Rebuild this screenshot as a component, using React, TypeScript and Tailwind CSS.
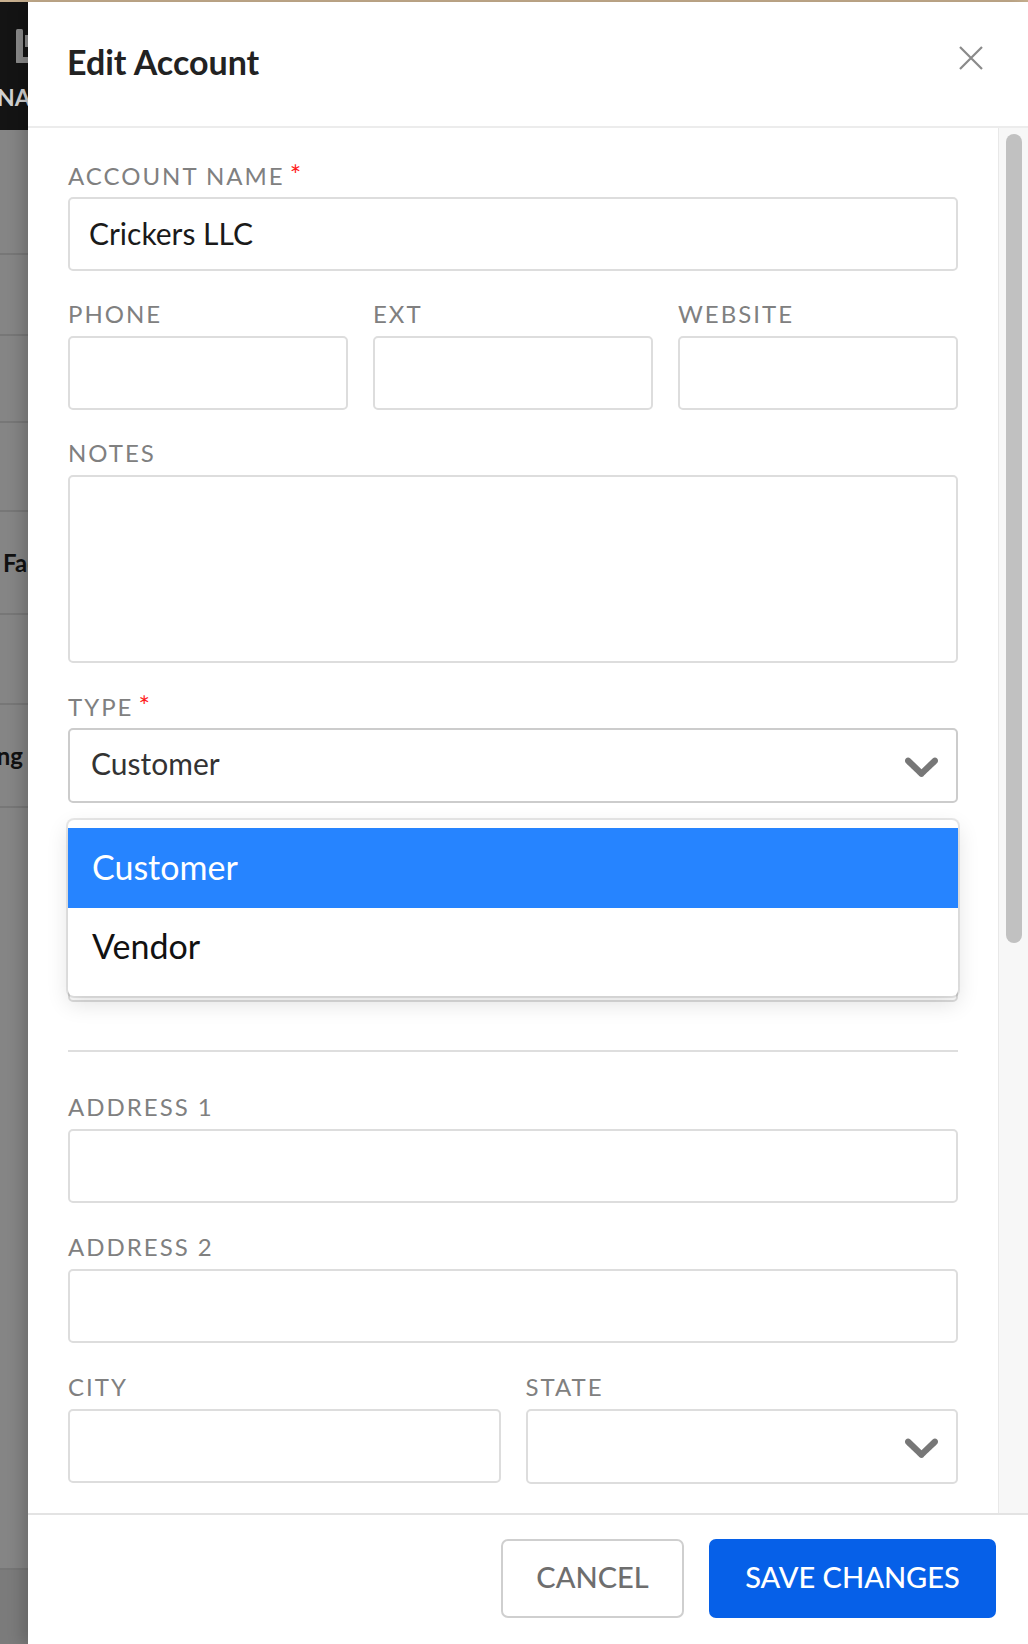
import React from "react";

const labelCls =
  "block h-[28px] leading-[28px] text-[24px] tracking-[2px] text-[#808080] mb-[8px] whitespace-nowrap";

function Label({ text, required }: { text: string; required?: boolean }) {
  return (
    <div className={labelCls}>
      {text}
      {required && <span className="ml-[5px] text-[27px] text-[#ff1a1a]">*</span>}
    </div>
  );
}

function Box({ h = "h-[74px]", children }: { h?: string; children?: React.ReactNode }) {
  return (
    <div
      className={`${h} border-2 border-[#dddddd] rounded-[5px] bg-white flex items-center pl-[19px] pb-[2px] text-[30px] text-[#1a1a1a]`}
    >
      {children}
    </div>
  );
}

function Chevron() {
  return (
    <svg width="57" height="57" viewBox="0 0 20 20" fill="#777777" aria-hidden="true">
      <path d="M4.516 7.548c0.436-0.446 1.043-0.481 1.576 0l3.908 3.747 3.908-3.747c0.533-0.481 1.141-0.446 1.574 0 0.436 0.445 0.408 1.197 0 1.615-0.406 0.418-4.695 4.502-4.695 4.502-0.217 0.223-0.502 0.335-0.787 0.335s-0.57-0.112-0.789-0.335c0 0-4.287-4.084-4.695-4.502s-0.436-1.17 0-1.615z" />
    </svg>
  );
}

function SelectBox({ value, border }: { value?: string; border: string }) {
  return (
    <div
      className={`h-[75px] border-2 ${border} rounded-[5px] bg-white flex items-center justify-between pl-[21px] pr-[6px] text-[30px] text-[#333333]`}
    >
      <span className="-mt-[4px]">{value}</span>
      <Chevron />
    </div>
  );
}

function BackdropStrip() {
  return (
    <aside className="w-[28px] shrink-0 flex flex-col bg-[#858585] overflow-hidden font-['Lato',sans-serif]">
      <div className="h-[128px] bg-[#141414] relative">
        <svg className="absolute left-[16px] top-[27px]" width="14" height="34" viewBox="0 0 14 34" aria-hidden="true">
          <rect x="0" y="0" width="7" height="34" rx="1.5" fill="#8a8a8a" />
          <rect x="0" y="28" width="14" height="6" rx="1" fill="#8a8a8a" />
          <rect x="9" y="6" width="5" height="12" fill="#8a8a8a" />
        </svg>
        <div className="absolute left-[-3px] top-[81px] text-[23px] font-bold text-[#d2d2d2] whitespace-nowrap leading-[28px]">
          NAILS
        </div>
      </div>
      <div className="h-[125px] border-b-2 border-[#777777]" />
      <div className="h-[81px] border-b-2 border-[#777777]" />
      <div className="h-[87px] border-b-2 border-[#777777]" />
      <div className="h-[89px] border-b-2 border-[#777777]" />
      <div className="h-[103px] border-b-2 border-[#777777] flex items-center pl-[3px]">
        <span className="text-[24px] font-bold text-[#111111] whitespace-nowrap">Facilities</span>
      </div>
      <div className="h-[90px] border-b-2 border-[#777777]" />
      <div className="h-[103px] border-b-2 border-[#777777] flex items-center justify-end pr-[5px]">
        <span className="text-[24px] font-bold text-[#111111] whitespace-nowrap">Billing</span>
      </div>
      <div className="h-[762px] border-b-2 border-[#767676]" />
      <div className="flex-1 bg-[#7b7b7b]" />
    </aside>
  );
}

export default function App() {
  return (
    <div className="w-[1028px] h-[1644px] flex flex-col overflow-hidden bg-[#858585] font-['Lato',sans-serif]">
      <div className="h-[2px] shrink-0 bg-[#c8b08f]" />
      <div className="flex flex-1 min-h-0">
        <BackdropStrip />
        <section className="flex-1 flex flex-col bg-white shadow-[-6px_0_14px_rgba(0,0,0,0.18)] relative">
          {/* header */}
          <header className="h-[126px] shrink-0 border-b-2 border-[#ececec] flex items-start justify-between pl-[39px] pr-[45px]">
            <h1 className="mt-[40px] text-[34px] leading-[40px] font-bold text-[#222222]">Edit Account</h1>
            <button className="mt-[44px] w-[24px] h-[24px]" aria-label="Close">
              <svg width="24" height="24" viewBox="0 0 24 24" aria-hidden="true">
                <path d="M1 1L23 23M23 1L1 23" stroke="#8a8a8a" strokeWidth="2.2" />
              </svg>
            </button>
          </header>

          {/* body */}
          <div className="flex-1 min-h-0 flex">
            <div className="flex-1 overflow-hidden px-[40px] pt-[33px]">
              <div className="flex flex-col">
                <div>
                  <Label text="ACCOUNT NAME" required />
                  <Box>Crickers LLC</Box>
                </div>

                <div className="mt-[29px] grid grid-cols-3 gap-x-[25px]">
                  <div>
                    <Label text="PHONE" />
                    <Box />
                  </div>
                  <div>
                    <Label text="EXT" />
                    <Box />
                  </div>
                  <div>
                    <Label text="WEBSITE" />
                    <Box />
                  </div>
                </div>

                <div className="mt-[29px]">
                  <Label text="NOTES" />
                  <Box h="h-[188px]" />
                </div>

                <div className="mt-[29px] relative z-10">
                  <Label text="TYPE" required />
                  <SelectBox value="Customer" border="border-[#cccccc]" />
                  {/* open option menu */}
                  <div className="absolute left-0 right-0 top-full mt-[17px] bg-white rounded-[6px] py-[8px] shadow-[0_0_0_2px_rgba(0,0,0,0.09),0_8px_22px_rgba(0,0,0,0.12)]">
                    <div className="h-[80px] flex items-center pl-[24px] pb-[4px] bg-[#2684ff] text-white text-[34px]">
                      Customer
                    </div>
                    <div className="h-[80px] flex items-center pl-[24px] pb-[5px] text-[#111111] text-[34px]">
                      Vendor
                    </div>
                  </div>
                </div>

                <div className="mt-[29px]">
                  <Label text="PARENT ACCOUNT" />
                  <Box h="h-[134px]" />
                </div>

                <div className="mt-[48px] h-[2px] bg-[#dedede]" />

                <div className="mt-[41px]">
                  <Label text="ADDRESS 1" />
                  <Box />
                </div>

                <div className="mt-[30px]">
                  <Label text="ADDRESS 2" />
                  <Box />
                </div>

                <div className="mt-[30px] grid grid-cols-2 gap-x-[25px]">
                  <div>
                    <Label text="CITY" />
                    <Box />
                  </div>
                  <div>
                    <Label text="STATE" />
                    <SelectBox border="border-[#dddddd]" />
                  </div>
                </div>

                <div className="mt-[30px] grid grid-cols-2 gap-x-[25px]">
                  <div>
                    <Label text="ZIP" />
                    <Box />
                  </div>
                  <div>
                    <Label text="COUNTRY" />
                    <Box />
                  </div>
                </div>
              </div>
            </div>

            {/* scrollbar */}
            <div className="w-[30px] shrink-0 bg-[#f7f7f7] border-l border-[#e8e8e8] pt-[6px] pl-[7px]">
              <div className="w-[16px] h-[809px] rounded-full bg-[#c1c1c1]" />
            </div>
          </div>

          {/* footer */}
          <footer className="h-[131px] shrink-0 border-t-2 border-[#e3e3e3] flex items-start justify-end gap-[25px] pt-[24px] pr-[32px]">
            <button className="w-[183px] h-[79px] border-2 border-[#cfcfcf] rounded-[7px] bg-white pb-[3px] text-[29px] font-medium text-[#6e6e6e]">
              CANCEL
            </button>
            <button className="w-[287px] h-[79px] rounded-[7px] bg-[#0660e8] pb-[3px] text-[29px] font-medium text-white">
              SAVE CHANGES
            </button>
          </footer>
        </section>
      </div>
    </div>
  );
}
